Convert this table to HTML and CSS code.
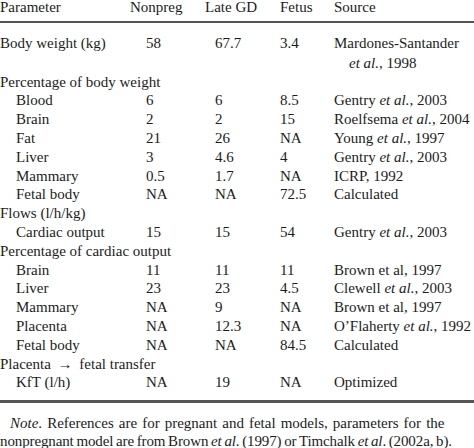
FILE: index.html
```html
<!DOCTYPE html>
<html>
<head>
<meta charset="utf-8">
<link rel="stylesheet" href="styles.css">
</head>
<body>
<div class="page">
  <div class="grid head">
    <div>Parameter</div><div>Nonpreg</div><div>Late GD</div><div>Fetus</div><div>Source</div>
  </div>
  <div class="rule top"></div>
  <div class="grid body">
    <div>Body weight (kg)</div><div class="np">58</div><div class="lg">67.7</div><div>3.4</div><div>Mardones-Santander<br><span class="cont"><i>et al.</i>, 1998</span></div>

    <div class="sec">Percentage of body weight</div>
    <div class="sub">Blood</div><div class="np">6</div><div class="lg">6</div><div>8.5</div><div>Gentry <i>et al.</i>, 2003</div>
    <div class="sub">Brain</div><div class="np">2</div><div class="lg">2</div><div>15</div><div>Roelfsema <i>et al.</i>, 2004</div>
    <div class="sub">Fat</div><div class="np">21</div><div class="lg">26</div><div>NA</div><div>Young <i>et al.</i>, 1997</div>
    <div class="sub">Liver</div><div class="np">3</div><div class="lg">4.6</div><div>4</div><div>Gentry <i>et al.</i>, 2003</div>
    <div class="sub">Mammary</div><div class="np">0.5</div><div class="lg">1.7</div><div>NA</div><div>ICRP, 1992</div>
    <div class="sub">Fetal body</div><div class="np">NA</div><div class="lg">NA</div><div>72.5</div><div>Calculated</div>

    <div class="sec">Flows (l/h/kg)</div>
    <div class="sub">Cardiac output</div><div class="np">15</div><div class="lg">15</div><div>54</div><div>Gentry <i>et al.</i>, 2003</div>

    <div class="sec">Percentage of cardiac output</div>
    <div class="sub">Brain</div><div class="np">11</div><div class="lg">11</div><div>11</div><div>Brown et al, 1997</div>
    <div class="sub">Liver</div><div class="np">23</div><div class="lg">23</div><div>4.5</div><div>Clewell <i>et al.</i>, 2003</div>
    <div class="sub">Mammary</div><div class="np">NA</div><div class="lg">9</div><div>NA</div><div>Brown et al, 1997</div>
    <div class="sub">Placenta</div><div class="np">NA</div><div class="lg">12.3</div><div>NA</div><div>O’Flaherty <i>et al.</i>, 1992</div>
    <div class="sub">Fetal body</div><div class="np">NA</div><div class="lg">NA</div><div>84.5</div><div>Calculated</div>

    <div class="sec">Placenta <span class="arrow">→</span> fetal transfer</div>
    <div class="sub">KfT (l/h)</div><div class="np">NA</div><div class="lg">19</div><div>NA</div><div>Optimized</div>
  </div>
  <div class="rule bottom"></div>
  <div class="note">
    <p class="l1"><i>Note</i>. References are for pregnant and fetal models, parameters for the</p>
    <p class="l2">nonpregnant model are from Brown <i>et al</i>. (1997) or Timchalk <i>et al</i>. (2002a, b).</p>
  </div>
</div>
</body>
</html>
```
FILE: styles.css
```css
html, body {
  margin: 0;
  padding: 0;
  background: #fff;
}
body {
  width: 474px;
  height: 448px;
  overflow: hidden;
  font-family: "Liberation Serif", "Times New Roman", serif;
  font-size: 15px;
  color: #1c1c1c;
}
.grid {
  display: grid;
  grid-template-columns: 130px 75px 75px 54px 1fr;
  line-height: 18.8px;
  white-space: nowrap;
}
.head {
  line-height: 14px;
}
.rule {
  background: #555;
}
.rule.top {
  height: 2px;
  margin-top: 7px;
}
.body {
  padding-top: 11px;
}
.np {
  padding-left: 16px;
}
.lg {
  padding-left: 10px;
}
.cont {
  display: inline-block;
  padding-left: 15px;
  margin-top: 1px;
}
.sec {
  grid-column: 1 / -1;
}
.sub {
  padding-left: 16px;
}
.arrow {
  padding: 0 3px;
}
.rule.bottom {
  height: 2.5px;
  margin-top: 8px;
}
.note {
  padding-top: 11px;
  line-height: 19.5px;
  white-space: nowrap;
}
.note p {
  margin: 0;
}
.l1 {
  padding-left: 10px;
  word-spacing: 1.3px;
}
.l2 {
  word-spacing: -0.9px;
  letter-spacing: -0.12px;
  line-height: 16px;
}
```
